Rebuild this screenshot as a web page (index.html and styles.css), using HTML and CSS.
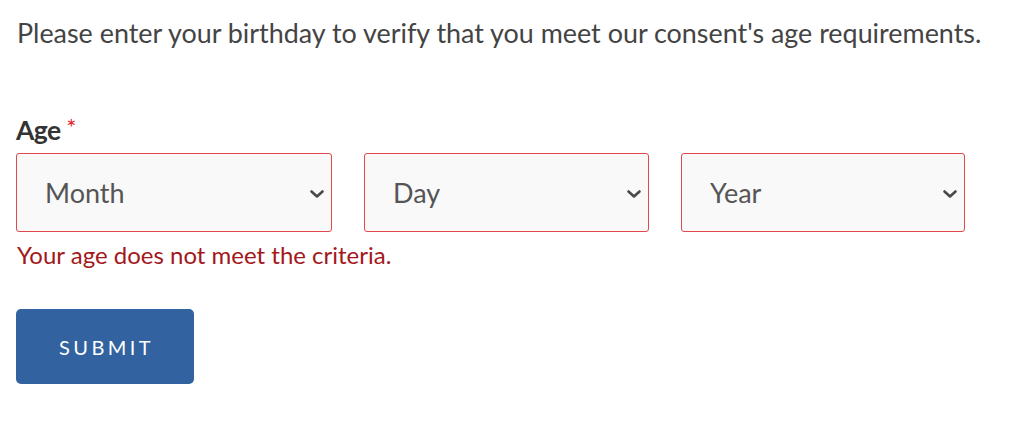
FILE: index.html
```html
<!DOCTYPE html>
<html lang="en">
<head>
<meta charset="utf-8">
<title>Age verification</title>
<link rel="stylesheet" href="styles.css">
</head>
<body>
<form class="form">
  <p class="intro">Please enter your birthday to verify that you meet our consent's age requirements.</p>
  <div class="field">
    <label class="label">Age <span class="req">*</span></label>
    <div class="selects">
      <div class="select-wrap month">
        <select class="select"><option>Month</option></select>
        <svg class="chev" viewBox="0 0 14 8" width="14" height="8"><path d="M1.5 1.5 L7 6.5 L12.5 1.5" fill="none" stroke="#4a4a4a" stroke-width="2.6" stroke-linecap="round" stroke-linejoin="round"/></svg>
      </div>
      <div class="select-wrap day">
        <select class="select"><option>Day</option></select>
        <svg class="chev" viewBox="0 0 14 8" width="14" height="8"><path d="M1.5 1.5 L7 6.5 L12.5 1.5" fill="none" stroke="#4a4a4a" stroke-width="2.6" stroke-linecap="round" stroke-linejoin="round"/></svg>
      </div>
      <div class="select-wrap year">
        <select class="select"><option>Year</option></select>
        <svg class="chev" viewBox="0 0 14 8" width="14" height="8"><path d="M1.5 1.5 L7 6.5 L12.5 1.5" fill="none" stroke="#4a4a4a" stroke-width="2.6" stroke-linecap="round" stroke-linejoin="round"/></svg>
      </div>
    </div>
    <div class="error">Your age does not meet the criteria.</div>
  </div>
  <button type="button" class="submit">SUBMIT</button>
</form>
</body>
</html>
```
FILE: styles.css
```css
html, body {
  margin: 0;
  padding: 0;
  background: #fff;
}
body {
  font-family: Lato, "Open Sans", "Liberation Sans", sans-serif;
  color: #444;
}
.form {
  padding: 14px 16px 0 16px;
}
.intro {
  margin: 0;
  font-size: 26.9px;
  line-height: 38px;
  color: #444;
  padding-left: 1px;
}
.field {
  margin-top: 62px;
}
.label {
  display: block;
  font-size: 26.5px;
  font-weight: 700;
  color: #333;
  line-height: 32px;
  letter-spacing: -0.6px;
}
.req {
  color: #e42525;
  font-weight: 400;
  font-size: 24px;
  vertical-align: top;
  letter-spacing: 0;
  margin-left: 0;
  position: relative;
  top: -3px;
}
.selects {
  display: flex;
  gap: 32px;
  margin-top: 7px;
}
.select-wrap {
  position: relative;
}
.month { width: 316px; }
.day { width: 285px; }
.year { width: 284px; }
.select {
  appearance: none;
  -webkit-appearance: none;
  width: 100%;
  height: 79px;
  box-sizing: border-box;
  border: 1.5px solid #e0484c;
  border-radius: 3px;
  background: #f9f9f9;
  font-family: Lato, "Open Sans", "Liberation Sans", sans-serif;
  font-size: 27px;
  color: #555;
  padding: 0 40px 0 28px;
  outline: none;
}
.chev {
  position: absolute;
  right: 8px;
  top: 37px;
  pointer-events: none;
}
.error {
  margin-top: 6px;
  font-size: 24px;
  line-height: 33px;
  color: #a3181b;
  padding-left: 1px;
}
.submit {
  margin-top: 38px;
  width: 178px;
  height: 75px;
  border: none;
  border-radius: 5px;
  background: #3262a0;
  color: #fff;
  font-family: Lato, "Open Sans", "Liberation Sans", sans-serif;
  font-size: 20px;
  letter-spacing: 3.4px;
  padding: 0 0 0 3px;
  cursor: pointer;
}
```
